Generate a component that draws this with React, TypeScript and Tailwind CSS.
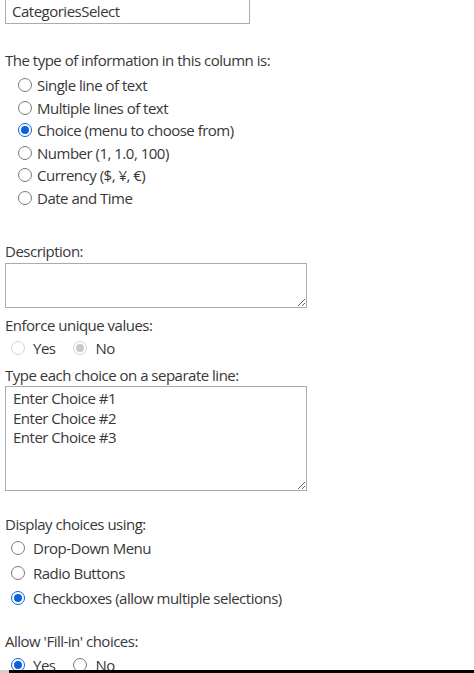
import React from 'react'

type RadioState = 'off' | 'on' | 'disabled' | 'disabledOn'

function Radio({ state = 'off' }: { state?: RadioState }) {
  if (state === 'on') {
    return (
      <span className="flex h-[14px] w-[14px] shrink-0 items-center justify-center rounded-full border border-[#0b63d8] bg-white">
        <span className="h-[8px] w-[8px] rounded-full bg-[#0b63d8]" />
      </span>
    )
  }
  if (state === 'disabled') {
    return <span className="h-[14px] w-[14px] shrink-0 rounded-full border border-[#d4d4d4] bg-white" />
  }
  if (state === 'disabledOn') {
    return (
      <span className="flex h-[14px] w-[14px] shrink-0 items-center justify-center rounded-full border border-[#d4d4d4] bg-white">
        <span className="h-[8px] w-[8px] rounded-full bg-[#c9c9c9]" />
      </span>
    )
  }
  return <span className="h-[14px] w-[14px] shrink-0 rounded-full border border-[#7a7a7a] bg-white" />
}

function Option({ label, state, gap = 'gap-[5px]' }: { label: string; state?: RadioState; gap?: string }) {
  return (
    <div className={`flex items-center ${gap}`}>
      <Radio state={state} />
      <span>{label}</span>
    </div>
  )
}

export default function App() {
  const types: [string, RadioState][] = [
    ['Single line of text', 'off'],
    ['Multiple lines of text', 'off'],
    ['Choice (menu to choose from)', 'on'],
    ['Number (1, 1.0, 100)', 'off'],
    ['Currency ($, ¥, €)', 'off'],
    ['Date and Time', 'off'],
  ]

  return (
    <div
      className="relative h-[673px] overflow-hidden bg-white px-[5px] text-[15px] leading-[22px] tracking-[-0.5px] text-[#383838]"
      style={{ fontFamily: '"Open Sans", "Noto Sans", sans-serif' }}
    >
      <div className="-mt-[6px] flex h-[30px] w-[245px] items-center border border-[#ababab] pt-[4px] pl-[6px]">
        CategoriesSelect
      </div>

      <div className="mt-[25px]">The type of information in this column is:</div>
      <div className="mt-[3px] flex flex-col pl-[13px] leading-[22.5px]">
        {types.map(([label, state]) => (
          <Option key={label} label={label} state={state} />
        ))}
      </div>

      <div className="mt-[31px]">Description:</div>
      <textarea
        readOnly
        className="mt-[1px] block h-[45px] w-[302px] border border-[#ababab] outline-none"
      />

      <div className="mt-[6px]">Enforce unique values:</div>
      <div className="mt-[1px] flex items-center pl-[6px]">
        <Option label="Yes" state="disabled" gap="gap-[8px]" />
        <div className="ml-[18px]">
          <Option label="No" state="disabledOn" gap="gap-[8px]" />
        </div>
      </div>

      <div className="mt-[5px]">Type each choice on a separate line:</div>
      <textarea
        readOnly
        defaultValue={'Enter Choice #1\nEnter Choice #2\nEnter Choice #3'}
        className="block h-[105px] w-[302px] resize-y border border-[#ababab] px-[7px] py-[2px] leading-[19.5px] tracking-[-0.5px] text-[#383838] outline-none"
      />

      <div className="mt-[22px]">Display choices using:</div>
      <div className="mt-[2px] flex flex-col gap-[3px] pl-[6px]">
        <Option label="Drop-Down Menu" gap="gap-[8px]" />
        <Option label="Radio Buttons" gap="gap-[8px]" />
        <Option label="Checkboxes (allow multiple selections)" state="on" gap="gap-[8px]" />
      </div>

      <div className="mt-[21px]">Allow 'Fill-in' choices:</div>
      <div className="mt-[2px] flex items-center pl-[6px]">
        <Option label="Yes" state="on" gap="gap-[8px]" />
        <div className="ml-[18px]">
          <Option label="No" gap="gap-[8px]" />
        </div>
      </div>

      <div className="absolute right-0 bottom-0 left-0 flex h-[3px]">
        <div className="w-[9px] bg-[#d0d0d0]" />
        <div className="flex-1 bg-black" />
      </div>
    </div>
  )
}
